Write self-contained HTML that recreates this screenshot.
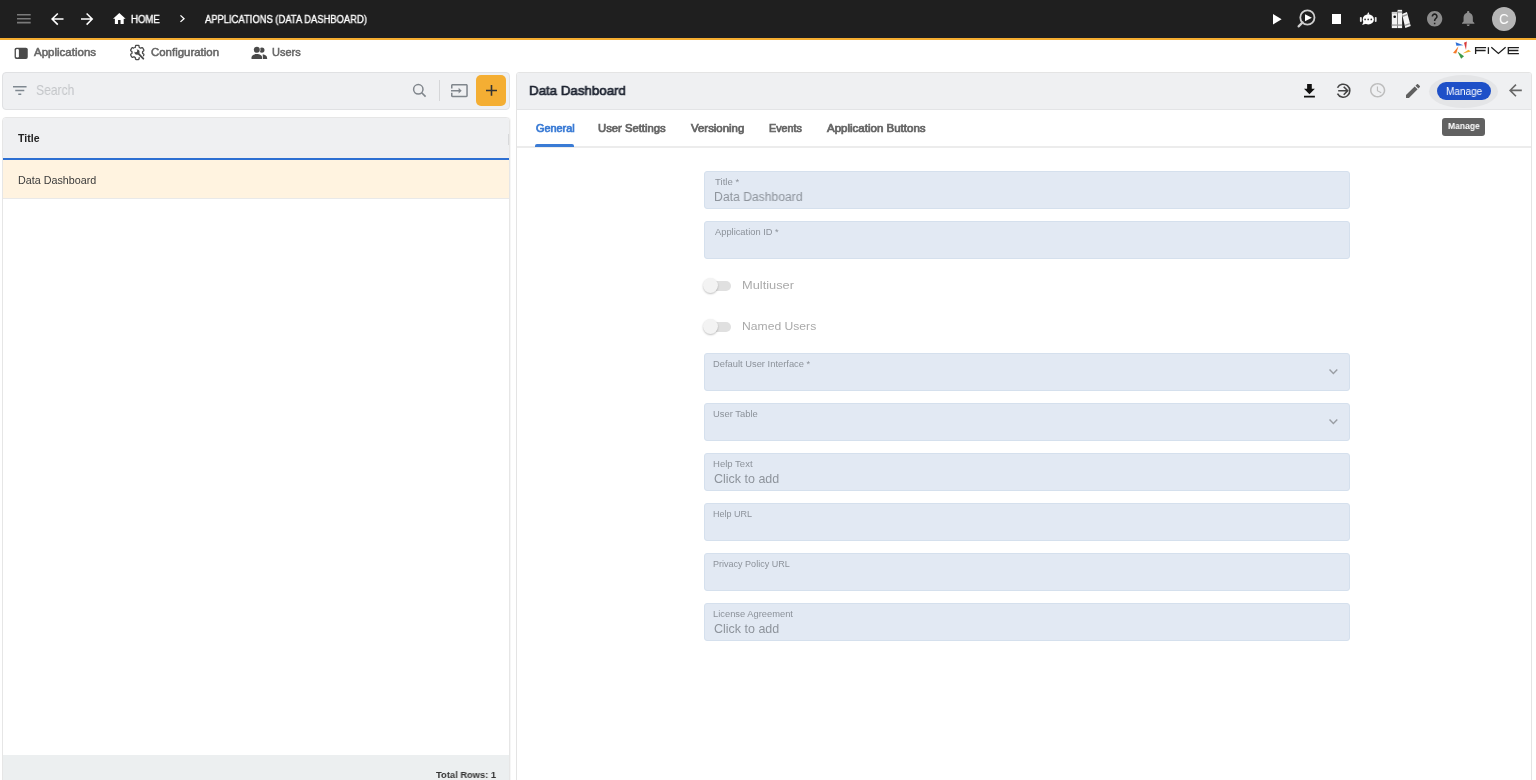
<!DOCTYPE html>
<html><head><meta charset="utf-8"><style>
*{box-sizing:border-box;margin:0;padding:0}
html,body{width:1536px;height:780px;overflow:hidden;background:#fff;font-family:"Liberation Sans",sans-serif}
.t{position:absolute;white-space:nowrap;line-height:1;transform-origin:0 0;will-change:transform}
svg{position:absolute;overflow:visible}
.b{position:absolute}
</style></head><body>
<div class="b" style="left:0;top:0;width:1536px;height:38px;background:#1f1f1f"></div>
<div class="b" style="left:0;top:38px;width:1536px;height:2px;background:#f5ad30"></div>
<div class="b" style="left:2px;top:72px;width:508px;height:38px;background:#eff0f2;border:1px solid #e0e1e3;border-radius:4px"></div>
<div class="b" style="left:2px;top:117px;width:508px;height:700px;background:#fff;border:1px solid #e6e6e6;border-radius:4px;box-shadow:1px 0 0 #f6f6f6;overflow:hidden"><div class="b" style="left:0;top:0;width:506px;height:42px;background:#eff0f2;border-bottom:2px solid #2d6fd2"></div><div class="b" style="left:0;top:42px;width:506px;height:39px;background:#fff3e0;border-bottom:1px solid #e9e9e9"></div><div class="b" style="left:505px;top:16px;width:1.5px;height:11px;background:#d8d9db"></div><div class="b" style="left:0;top:637px;width:506px;height:60px;background:#eceff0"></div></div>
<div class="b" style="left:516px;top:72px;width:1016px;height:740px;background:#fff;border:1px solid #e4e4e4;border-radius:3px;overflow:hidden"><div class="b" style="left:0;top:0;width:1014px;height:37px;background:#eff0f2;border-bottom:1px solid #e3e4e6"></div><div class="b" style="left:0;top:73px;width:1014px;height:2px;background:#ececec"></div><div class="b" style="left:18px;top:71px;width:39px;height:3px;background:#3a7bd5;border-radius:2px 2px 0 0"></div></div>
<div class="b" style="left:704px;top:171px;width:646px;height:38px;background:#e2e9f3;border:1px solid #d5e0ed;border-radius:3px"></div>
<div class="b" style="left:704px;top:221px;width:646px;height:38px;background:#e2e9f3;border:1px solid #d5e0ed;border-radius:3px"></div>
<div class="b" style="left:704px;top:353px;width:646px;height:38px;background:#e2e9f3;border:1px solid #d5e0ed;border-radius:3px"></div>
<div class="b" style="left:704px;top:403px;width:646px;height:38px;background:#e2e9f3;border:1px solid #d5e0ed;border-radius:3px"></div>
<div class="b" style="left:704px;top:453px;width:646px;height:38px;background:#e2e9f3;border:1px solid #d5e0ed;border-radius:3px"></div>
<div class="b" style="left:704px;top:503px;width:646px;height:38px;background:#e2e9f3;border:1px solid #d5e0ed;border-radius:3px"></div>
<div class="b" style="left:704px;top:553px;width:646px;height:38px;background:#e2e9f3;border:1px solid #d5e0ed;border-radius:3px"></div>
<div class="b" style="left:704px;top:603px;width:646px;height:38px;background:#e2e9f3;border:1px solid #d5e0ed;border-radius:3px"></div>
<div class="b" style="left:704px;top:280.5px;width:27px;height:10.6px;background:#e0e0e0;border-radius:6px"></div>
<div class="b" style="left:703px;top:278.3px;width:15px;height:15px;background:#f3f3f3;border-radius:50%;box-shadow:0 1px 2px rgba(0,0,0,.25)"></div>
<div class="b" style="left:704px;top:321.5px;width:27px;height:10.6px;background:#e0e0e0;border-radius:6px"></div>
<div class="b" style="left:703px;top:319.3px;width:15px;height:15px;background:#f3f3f3;border-radius:50%;box-shadow:0 1px 2px rgba(0,0,0,.25)"></div>
<div class="b" style="left:1429px;top:74.5px;width:69px;height:33px;background:#e4e5e7;border-radius:50%"></div>
<div class="b" style="left:1436.5px;top:81.6px;width:54.5px;height:18.5px;background:#1e50c8;border-radius:10px"></div>
<div class="b" style="left:1442.4px;top:118.1px;width:42.7px;height:18.4px;background:#616161;border-radius:3px"></div>
<div class="b" style="left:1492px;top:6.6px;width:24.4px;height:24.4px;background:#b5b5b5;border-radius:50%"></div>
<div class="b" style="left:476.2px;top:75.4px;width:30px;height:30.5px;background:#f4ae33;border-radius:5px"></div>
<div class="b" style="left:439px;top:80px;width:1px;height:21px;background:#d5d6d8"></div>
<svg style="left:16.50px;top:14.30px;width:13.70px;height:9.40px;" viewBox="3 6 18 12" preserveAspectRatio="none"><path d="M3 18h18v-2H3v2zm0-5h18v-2H3v2zm0-7v2h18V6H3z" fill="#7a7a7a"/></svg>
<svg style="left:50.50px;top:12.80px;width:12.50px;height:12.20px;" viewBox="4 4 16 16" preserveAspectRatio="none"><path d="M20 11H7.83l5.59-5.59L12 4l-8 8 8 8 1.41-1.41L7.83 13H20v-2z" fill="#ffffff"/></svg>
<svg style="left:80.70px;top:12.80px;width:12.30px;height:12.20px;" viewBox="4 4 16 16" preserveAspectRatio="none"><path d="M12 4l-1.41 1.41L16.17 11H4v2h12.17l-5.58 5.59L12 20l8-8z" fill="#ffffff"/></svg>
<svg style="left:113.00px;top:13.00px;width:12.60px;height:11.00px;" viewBox="2 3 20 17" preserveAspectRatio="none"><path d="M10 20v-6h4v6h5v-8h3L12 3 2 12h3v8z" fill="#ffffff"/></svg>
<svg style="left:179.90px;top:15.20px;width:5.00px;height:7.30px;" viewBox="8.59 6 7.41 12" preserveAspectRatio="none"><path d="M10 6L8.59 7.41 13.17 12l-4.58 4.59L10 18l6-6z" fill="#ffffff"/></svg>
<svg style="left:1272.80px;top:13.70px;width:8.60px;height:10.50px;" viewBox="8 5 11 14" preserveAspectRatio="none"><path d="M8 5v14l11-7z" fill="#ffffff"/></svg>
<svg style="left:1332.00px;top:13.90px;width:9.00px;height:10.00px;" viewBox="6 6 12 12" preserveAspectRatio="none"><path d="M6 6h12v12H6z" fill="#ffffff"/></svg>
<svg style="left:1427.00px;top:11.00px;width:15.30px;height:15.50px;" viewBox="2 2 20 20" preserveAspectRatio="none"><path d="M12 2C6.48 2 2 6.48 2 12s4.48 10 10 10 10-4.48 10-10S17.52 2 12 2zm1 17h-2v-2h2v2zm2.07-7.75l-.9.92C13.45 12.9 13 13.5 13 15h-2v-.5c0-1.1.45-2.1 1.17-2.83l1.24-1.26c.37-.36.59-.86.59-1.41 0-1.1-.9-2-2-2s-2 .9-2 2H8c0-2.21 1.79-4 4-4s4 1.79 4 4c0 .88-.36 1.68-.93 2.25z" fill="#8c8c8c"/></svg>
<svg style="left:1461.80px;top:11.40px;width:12.40px;height:15.00px;" viewBox="4 2.5 16 19.5" preserveAspectRatio="none"><path d="M12 22c1.1 0 2-.9 2-2h-4c0 1.1.89 2 2 2zm6-6v-5c0-3.07-1.64-5.64-4.5-6.32V4c0-.83-.67-1.5-1.5-1.5s-1.5.67-1.5 1.5v.68C7.63 5.36 6 7.92 6 11v5l-2 2v1h16v-1l-2-2z" fill="#8c8c8c"/></svg>
<svg style="left:12.95px;top:86.00px;width:13.55px;height:9.10px;" viewBox="3 6 18 12" preserveAspectRatio="none"><path d="M10 18h4v-2h-4v2zM3 6v2h18V6H3zm3 7h12v-2H6v2z" fill="#7f8890"/></svg>
<svg style="left:410.00px;top:82.00px;width:18.00px;height:17.00px;" viewBox="410 82 18 17" preserveAspectRatio="none"><circle cx="418.3" cy="89.3" r="4.7" fill="none" stroke="#80868c" stroke-width="1.5"/><line x1="421.7" y1="92.7" x2="425.6" y2="96.6" stroke="#80868c" stroke-width="1.6"/></svg>
<svg style="left:451.20px;top:84.00px;width:16.80px;height:13.30px;" viewBox="1 3.01 22 17.98" preserveAspectRatio="none"><path d="M21 3.01H3c-1.1 0-2 .9-2 2V9h2V4.99h18v14.03H3V15H1v4.01c0 1.1.9 1.98 2 1.98h18c1.1 0 2-.88 2-1.98v-14c0-1.11-.9-2-2-2zM11 16l4-4-4-4v3H1v2h10v3z" fill="#80868c"/></svg>
<svg style="left:485.90px;top:85.20px;width:11.00px;height:10.80px;" viewBox="5 5 14 14" preserveAspectRatio="none"><path d="M19 13h-6v6h-2v-6H5v-2h6V5h2v6h6v2z" fill="#333333"/></svg>
<svg style="left:1304.40px;top:83.70px;width:10.90px;height:13.40px;" viewBox="5 3 14 17" preserveAspectRatio="none"><path d="M19 9h-4V3H9v6H5l7 7 7-7zM5 18v2h14v-2H5z" fill="#111111"/></svg>
<svg style="left:1370.00px;top:83.20px;width:15.30px;height:14.40px;" viewBox="2 2 20 20" preserveAspectRatio="none"><path d="M11.99 2C6.47 2 2 6.48 2 12s4.47 10 9.99 10C17.52 22 22 17.52 22 12S17.52 2 11.99 2zM12 20c-4.42 0-8-3.58-8-8s3.58-8 8-8 8 3.58 8 8-3.58 8-8 8zm.5-13H11v6l5.25 3.15.75-1.23-4.5-2.67z" fill="#bdbdbd"/></svg>
<svg style="left:1405.60px;top:83.70px;width:14.10px;height:13.90px;" viewBox="3 3 18 18" preserveAspectRatio="none"><path d="M3 17.25V21h3.75L17.81 9.94l-3.75-3.75L3 17.25zM20.71 7.04c.39-.39.39-1.02 0-1.41l-2.34-2.34c-.39-.39-1.02-.39-1.41 0l-1.83 1.83 3.75 3.75 1.83-1.83z" fill="#606060"/></svg>
<svg style="left:1508.60px;top:84.00px;width:12.80px;height:12.80px;" viewBox="4 4 16 16" preserveAspectRatio="none"><path d="M20 11H7.83l5.59-5.59L12 4l-8 8 8 8 1.41-1.41L7.83 13H20v-2z" fill="#666666"/></svg>
<svg style="left:1329.00px;top:369.00px;width:8.80px;height:5.60px;" viewBox="6 8.59 12 7.41" preserveAspectRatio="none"><path d="M16.59 8.59L12 13.17 7.41 8.59 6 10l6 6 6-6z" fill="#9a9ea4"/></svg>
<svg style="left:1329.00px;top:419.00px;width:8.80px;height:5.60px;" viewBox="6 8.59 12 7.41" preserveAspectRatio="none"><path d="M16.59 8.59L12 13.17 7.41 8.59 6 10l6 6 6-6z" fill="#9a9ea4"/></svg>
<svg style="left:248.00px;top:44.00px;width:22.00px;height:18.00px;" viewBox="248 44 22 18" preserveAspectRatio="none"><circle cx="261.9" cy="50.1" r="2.6" fill="#4a4a4a"/><circle cx="256.8" cy="49.8" r="3.7" fill="#fff"/><circle cx="256.8" cy="49.8" r="3.0" fill="#4a4a4a"/><path d="M251.5 59 V57.6 C251.5 55.4 253.9 54.1 256.8 54.1 C259.7 54.1 262.1 55.4 262.1 57.6 V59z" fill="#4a4a4a"/><path d="M262.7 54.2 C265.2 54.5 267.1 56 267.1 57.9 V59 H262.9z" fill="#4a4a4a"/></svg>
<svg style="left:1333.00px;top:81.00px;width:20.00px;height:19.00px;" viewBox="1333 81 20 19" preserveAspectRatio="none"><path d="M1337.51 87.75 A6.5 6.5 0 1 1 1337.51 93.65" fill="none" stroke="#444" stroke-width="1.6"/><path d="M1338.2 90.7 H1347.6 M1343.7 86.7 L1347.7 90.7 L1343.7 94.7" fill="none" stroke="#444" stroke-width="1.6"/></svg>
<svg style="left:13.90px;top:46.50px;width:14.35px;height:12.50px;" viewBox="0 0 24 20" preserveAspectRatio="none"><rect x="1" y="1" width="22" height="18" rx="3" fill="#4a4a4a"/><rect x="3.2" y="3.2" width="5" height="13.6" rx="2.2" fill="#fff"/></svg>
<svg style="left:1290.00px;top:5.00px;width:30.00px;height:27.00px;" viewBox="1290 5 30 27" preserveAspectRatio="none"><circle cx="1307.4" cy="17.5" r="7.1" fill="none" stroke="#cfcfcf" stroke-width="1.8"/><line x1="1298.6" y1="26.4" x2="1302.6" y2="22.4" stroke="#cfcfcf" stroke-width="2.2" stroke-linecap="round"/><path d="M1305 14.2 L1311.9 17.7 L1305 21.2z" fill="#fff"/></svg>
<svg style="left:1355.00px;top:8.00px;width:25.00px;height:22.00px;" viewBox="1355 8 25 22" preserveAspectRatio="none"><ellipse cx="1368.3" cy="19.4" rx="5.6" ry="5.0" fill="#fff"/><rect x="1359.9" y="16.9" width="1.9" height="5" rx="0.9" fill="#e6e6e6"/><rect x="1374.8" y="16.9" width="1.8" height="5" rx="0.9" fill="#e6e6e6"/><path d="M1367 14.8 L1368.3 12 L1369.6 14.8z" fill="#fff"/><path d="M1363.6 21.5 L1362.2 25.1 L1366.5 23.6z" fill="#fff"/><circle cx="1365.1" cy="19.4" r="0.85" fill="#333"/><circle cx="1368.2" cy="19.4" r="0.85" fill="#333"/><circle cx="1371.3" cy="19.4" r="0.85" fill="#333"/></svg>
<svg style="left:1388.00px;top:6.00px;width:26.00px;height:25.00px;" viewBox="1388 6 26 25" preserveAspectRatio="none"><rect x="1391.8" y="11.9" width="5.3" height="16.2" fill="#f4f4f4"/><rect x="1397.6" y="9.85" width="4.5" height="18.25" fill="#f4f4f4"/><path d="M1402.1 14 L1406.9 12.1 L1410.75 25.9 L1405.3 28.1z" fill="#f4f4f4"/><circle cx="1394.7" cy="16.7" r="1.3" fill="#111"/><rect x="1391.8" y="24.3" width="10.3" height="1.6" fill="#a8a8a8"/><rect x="1391.8" y="12.4" width="5.3" height="1.2" fill="#bbb"/><rect x="1397.6" y="11.1" width="4.5" height="2" fill="#aaa"/><rect x="1397" y="11" width="0.6" height="17" fill="#888"/><path d="M1402.6 15.6 L1407.4 13.7 L1407.8 15.1 L1403 17z" fill="#999"/><path d="M1404.9 24.8 L1409.7 22.9 L1410.1 24.2 L1405.3 26.1z" fill="#999"/></svg>
<svg style="left:130.20px;top:45.10px;width:14.55px;height:14.95px;" viewBox="0.4 0.4 23.2 23.2" preserveAspectRatio="none"><path d="M20.40 12.00 L20.40 12.15 L20.40 12.29 L20.40 12.44 L20.40 12.59 L20.40 12.74 L20.42 12.88 L20.44 13.04 L20.49 13.19 L20.58 13.36 L20.73 13.54 L20.97 13.74 L21.29 13.97 L21.65 14.23 L21.99 14.49 L22.24 14.74 L22.39 14.98 L22.46 15.20 L22.47 15.40 L22.45 15.60 L22.40 15.79 L22.35 15.97 L22.28 16.15 L22.21 16.33 L22.14 16.51 L22.06 16.69 L21.98 16.87 L21.89 17.04 L21.80 17.21 L21.71 17.38 L21.61 17.55 L21.51 17.72 L21.41 17.88 L21.31 18.05 L21.20 18.21 L21.09 18.37 L20.98 18.52 L20.86 18.68 L20.74 18.83 L20.61 18.98 L20.48 19.12 L20.34 19.25 L20.18 19.37 L20.00 19.46 L19.78 19.51 L19.50 19.50 L19.15 19.41 L18.76 19.25 L18.35 19.06 L17.99 18.90 L17.70 18.79 L17.47 18.75 L17.28 18.76 L17.12 18.79 L16.97 18.85 L16.84 18.91 L16.71 18.98 L16.58 19.05 L16.45 19.13 L16.33 19.20 L16.20 19.27 L16.07 19.35 L15.95 19.42 L15.82 19.49 L15.69 19.57 L15.57 19.65 L15.44 19.73 L15.32 19.83 L15.21 19.95 L15.11 20.11 L15.03 20.33 L14.97 20.64 L14.93 21.03 L14.90 21.47 L14.84 21.90 L14.74 22.24 L14.62 22.49 L14.46 22.66 L14.29 22.77 L14.11 22.85 L13.92 22.90 L13.73 22.95 L13.54 22.98 L13.35 23.01 L13.16 23.04 L12.97 23.06 L12.77 23.07 L12.58 23.08 L12.39 23.09 L12.19 23.10 L12.00 23.10 L11.81 23.10 L11.61 23.09 L11.42 23.08 L11.23 23.07 L11.03 23.06 L10.84 23.04 L10.65 23.01 L10.46 22.98 L10.27 22.95 L10.08 22.90 L9.89 22.85 L9.71 22.77 L9.54 22.66 L9.38 22.49 L9.26 22.24 L9.16 21.90 L9.10 21.47 L9.07 21.03 L9.03 20.64 L8.97 20.33 L8.89 20.11 L8.79 19.95 L8.68 19.83 L8.56 19.73 L8.43 19.65 L8.31 19.57 L8.18 19.49 L8.05 19.42 L7.93 19.35 L7.80 19.27 L7.67 19.20 L7.55 19.13 L7.42 19.05 L7.29 18.98 L7.16 18.91 L7.03 18.85 L6.88 18.79 L6.72 18.76 L6.53 18.75 L6.30 18.79 L6.01 18.90 L5.65 19.06 L5.24 19.25 L4.85 19.41 L4.50 19.50 L4.22 19.51 L4.00 19.46 L3.82 19.37 L3.66 19.25 L3.52 19.12 L3.39 18.98 L3.26 18.83 L3.14 18.68 L3.02 18.52 L2.91 18.37 L2.80 18.21 L2.69 18.05 L2.59 17.88 L2.49 17.72 L2.39 17.55 L2.29 17.38 L2.20 17.21 L2.11 17.04 L2.02 16.87 L1.94 16.69 L1.86 16.51 L1.79 16.33 L1.72 16.15 L1.65 15.97 L1.60 15.79 L1.55 15.60 L1.53 15.40 L1.54 15.20 L1.61 14.98 L1.76 14.74 L2.01 14.49 L2.35 14.23 L2.71 13.97 L3.03 13.74 L3.27 13.54 L3.42 13.36 L3.51 13.19 L3.56 13.04 L3.58 12.88 L3.60 12.74 L3.60 12.59 L3.60 12.44 L3.60 12.29 L3.60 12.15 L3.60 12.00 L3.60 11.85 L3.60 11.71 L3.60 11.56 L3.60 11.41 L3.60 11.26 L3.58 11.12 L3.56 10.96 L3.51 10.81 L3.42 10.64 L3.27 10.46 L3.03 10.26 L2.71 10.03 L2.35 9.77 L2.01 9.51 L1.76 9.26 L1.61 9.02 L1.54 8.80 L1.53 8.60 L1.55 8.40 L1.60 8.21 L1.65 8.03 L1.72 7.85 L1.79 7.67 L1.86 7.49 L1.94 7.31 L2.02 7.13 L2.11 6.96 L2.20 6.79 L2.29 6.62 L2.39 6.45 L2.49 6.28 L2.59 6.12 L2.69 5.95 L2.80 5.79 L2.91 5.63 L3.02 5.48 L3.14 5.32 L3.26 5.17 L3.39 5.02 L3.52 4.88 L3.66 4.75 L3.82 4.63 L4.00 4.54 L4.22 4.49 L4.50 4.50 L4.85 4.59 L5.24 4.75 L5.65 4.94 L6.01 5.10 L6.30 5.21 L6.53 5.25 L6.72 5.24 L6.88 5.21 L7.03 5.15 L7.16 5.09 L7.29 5.02 L7.42 4.95 L7.55 4.87 L7.67 4.80 L7.80 4.73 L7.93 4.65 L8.05 4.58 L8.18 4.51 L8.31 4.43 L8.43 4.35 L8.56 4.27 L8.68 4.17 L8.79 4.05 L8.89 3.89 L8.97 3.67 L9.03 3.36 L9.07 2.97 L9.10 2.53 L9.16 2.10 L9.26 1.76 L9.38 1.51 L9.54 1.34 L9.71 1.23 L9.89 1.15 L10.08 1.10 L10.27 1.05 L10.46 1.02 L10.65 0.99 L10.84 0.96 L11.03 0.94 L11.23 0.93 L11.42 0.92 L11.61 0.91 L11.81 0.90 L12.00 0.90 L12.19 0.90 L12.39 0.91 L12.58 0.92 L12.77 0.93 L12.97 0.94 L13.16 0.96 L13.35 0.99 L13.54 1.02 L13.73 1.05 L13.92 1.10 L14.11 1.15 L14.29 1.23 L14.46 1.34 L14.62 1.51 L14.74 1.76 L14.84 2.10 L14.90 2.53 L14.93 2.97 L14.97 3.36 L15.03 3.67 L15.11 3.89 L15.21 4.05 L15.32 4.17 L15.44 4.27 L15.57 4.35 L15.69 4.43 L15.82 4.51 L15.95 4.58 L16.07 4.65 L16.20 4.73 L16.33 4.80 L16.45 4.87 L16.58 4.95 L16.71 5.02 L16.84 5.09 L16.97 5.15 L17.12 5.21 L17.28 5.24 L17.47 5.25 L17.70 5.21 L17.99 5.10 L18.35 4.94 L18.76 4.75 L19.15 4.59 L19.50 4.50 L19.78 4.49 L20.00 4.54 L20.18 4.63 L20.34 4.75 L20.48 4.88 L20.61 5.02 L20.74 5.17 L20.86 5.32 L20.98 5.48 L21.09 5.63 L21.20 5.79 L21.31 5.95 L21.41 6.12 L21.51 6.28 L21.61 6.45 L21.71 6.62 L21.80 6.79 L21.89 6.96 L21.98 7.13 L22.06 7.31 L22.14 7.49 L22.21 7.67 L22.28 7.85 L22.35 8.03 L22.40 8.21 L22.45 8.40 L22.47 8.60 L22.46 8.80 L22.39 9.02 L22.24 9.26 L21.99 9.51 L21.65 9.77 L21.29 10.03 L20.97 10.26 L20.73 10.46 L20.58 10.64 L20.49 10.81 L20.44 10.96 L20.42 11.12 L20.40 11.26 L20.40 11.41 L20.40 11.56 L20.40 11.71 L20.40 11.85z" fill="none" stroke="#4a4a4a" stroke-width="2.1"/><line x1="13" y1="13" x2="21.6" y2="21.6" stroke="#fff" stroke-width="5.5" stroke-linecap="round"/><line x1="13" y1="13" x2="21.6" y2="21.6" stroke="#4a4a4a" stroke-width="3" stroke-linecap="round"/><circle cx="11.6" cy="11.4" r="4.1" fill="#4a4a4a"/><circle cx="9.4" cy="9.2" r="2.5" fill="#fff"/><path d="M7.5 10.2 L10.4 7.3 L8 5 L5 8z" fill="#fff"/></svg>
<svg style="left:1450.00px;top:40.00px;width:72.00px;height:21.00px;" viewBox="1450 40 72 21" preserveAspectRatio="none"><path d="M1455.6 42.2 L1456.4 45.8 L1463.4 45.3z" fill="#2f6fd6"/><path d="M1464 42.7 L1466.8 41.5 L1466 50z" fill="#d93a3a"/><path d="M1468.4 49.7 L1471 51.5 L1462.7 53.6z" fill="#f2ad2e"/><path d="M1461.1 58.8 L1464 56.2 L1457.5 51.5z" fill="#3c9a4a"/><path d="M1453 53.1 L1456.2 53.6 L1458.5 46.3z" fill="#f57a2a"/><g stroke="#1f1f1f" stroke-width="1.3" fill="none"><path d="M1486.1 47.6 H1475.6 V53.9 M1475.6 50.5 H1485.6"/><path d="M1488.4 47.2 V53.9"/><path d="M1491.3 47.3 L1498.4 53.5 L1505.6 47.3"/><path d="M1518.9 47.6 H1508.3 V53.6 H1518.9 M1508.3 50.5 H1518.4"/></g></svg>
<div class="t" style="left:130.57px;top:15.40px;font-size:10.000px;font-weight:400;-webkit-text-stroke:0.35px #ffffff;color:#ffffff;transform:scaleX(0.9599);">HOME</div>
<div class="t" style="left:205.38px;top:15.40px;font-size:10.000px;font-weight:400;-webkit-text-stroke:0.35px #ffffff;color:#ffffff;transform:scaleX(0.9397);">APPLICATIONS (DATA DASHBOARD)</div>
<div class="t" style="left:34.14px;top:47.97px;font-size:10.329px;font-weight:400;-webkit-text-stroke:0.5px #666666;color:#666666;transform:scaleX(1.1156);">Applications</div>
<div class="t" style="left:150.65px;top:47.97px;font-size:10.329px;font-weight:400;-webkit-text-stroke:0.5px #666666;color:#666666;transform:scaleX(1.1087);">Configuration</div>
<div class="t" style="left:271.74px;top:47.48px;font-size:10.903px;font-weight:400;-webkit-text-stroke:0.5px #666666;color:#666666;transform:scaleX(1.0093);">Users</div>
<div class="t" style="left:35.57px;top:82.81px;font-size:14.104px;font-weight:400;color:#c4c6c9;transform:scaleX(0.8589);">Search</div>
<div class="t" style="left:18.39px;top:134.17px;font-size:10.274px;font-weight:700;color:#222222;transform:scaleX(1.0287);">Title</div>
<div class="t" style="left:17.64px;top:176.08px;font-size:10.264px;font-weight:400;color:#3a3a3a;transform:scaleX(1.0492);">Data Dashboard</div>
<div class="t" style="left:436.29px;top:769.50px;font-size:9.530px;font-weight:700;color:#333333;transform:scaleX(0.9843);">Total Rows: 1</div>
<div class="t" style="left:528.89px;top:83.65px;font-size:13.701px;font-weight:400;-webkit-text-stroke:0.7px #1d2330;color:#1d2330;transform:scaleX(0.9720);">Data Dashboard</div>
<div class="t" style="left:535.60px;top:124.19px;font-size:10.132px;font-weight:400;-webkit-text-stroke:0.7px #3a7bd5;color:#3a7bd5;transform:scaleX(1.0735);">General</div>
<div class="t" style="left:598.43px;top:124.07px;font-size:10.272px;font-weight:400;-webkit-text-stroke:0.7px #666666;color:#666666;transform:scaleX(1.0964);">User Settings</div>
<div class="t" style="left:691.46px;top:124.07px;font-size:10.272px;font-weight:400;-webkit-text-stroke:0.7px #666666;color:#666666;transform:scaleX(1.1117);">Versioning</div>
<div class="t" style="left:769.28px;top:124.07px;font-size:10.272px;font-weight:400;-webkit-text-stroke:0.7px #666666;color:#666666;transform:scaleX(1.0464);">Events</div>
<div class="t" style="left:827.20px;top:124.07px;font-size:10.272px;font-weight:400;-webkit-text-stroke:0.7px #666666;color:#666666;transform:scaleX(1.1216);">Application Buttons</div>
<div class="t" style="left:714.69px;top:177.62px;font-size:9.035px;font-weight:400;color:#8c929a;transform:scaleX(1.0638);">Title *</div>
<div class="t" style="left:714.88px;top:227.62px;font-size:9.035px;font-weight:400;color:#8c929a;transform:scaleX(1.0330);">Application ID *</div>
<div class="t" style="left:713.43px;top:359.62px;font-size:9.035px;font-weight:400;color:#8c929a;transform:scaleX(1.0374);">Default User Interface *</div>
<div class="t" style="left:713.43px;top:409.62px;font-size:9.035px;font-weight:400;color:#8c929a;transform:scaleX(1.0428);">User Table</div>
<div class="t" style="left:713.42px;top:459.62px;font-size:9.035px;font-weight:400;color:#8c929a;transform:scaleX(1.0568);">Help Text</div>
<div class="t" style="left:713.46px;top:509.62px;font-size:9.035px;font-weight:400;color:#8c929a;transform:scaleX(0.9922);">Help URL</div>
<div class="t" style="left:713.46px;top:559.62px;font-size:9.035px;font-weight:400;color:#8c929a;transform:scaleX(1.0011);">Privacy Policy URL</div>
<div class="t" style="left:713.43px;top:609.62px;font-size:9.035px;font-weight:400;color:#8c929a;transform:scaleX(1.0358);">License Agreement</div>
<div class="t" style="left:713.91px;top:191.44px;font-size:12.303px;font-weight:400;color:#8e949c;transform:scaleX(0.9898);">Data Dashboard</div>
<div class="t" style="left:713.55px;top:472.59px;font-size:12.127px;font-weight:400;color:#8e949c;transform:scaleX(1.0310);">Click to add</div>
<div class="t" style="left:713.55px;top:622.59px;font-size:12.127px;font-weight:400;color:#8e949c;transform:scaleX(1.0310);">Click to add</div>
<div class="t" style="left:742.09px;top:279.87px;font-size:11.096px;font-weight:400;color:#aaaaaa;transform:scaleX(1.1568);">Multiuser</div>
<div class="t" style="left:742.15px;top:320.67px;font-size:11.096px;font-weight:400;color:#aaaaaa;transform:scaleX(1.0957);">Named Users</div>
<div class="t" style="left:1445.95px;top:85.61px;font-size:10.580px;font-weight:400;color:#ffffff;transform:scaleX(0.9486);">Manage</div>
<div class="t" style="left:1447.96px;top:121.56px;font-size:8.986px;font-weight:700;color:#ffffff;transform:scaleX(0.9479);">Manage</div>
<div class="t" style="left:1499.39px;top:11.41px;font-size:15.286px;font-weight:400;color:#ffffff;transform:scaleX(0.8709);">C</div>
</body></html>
